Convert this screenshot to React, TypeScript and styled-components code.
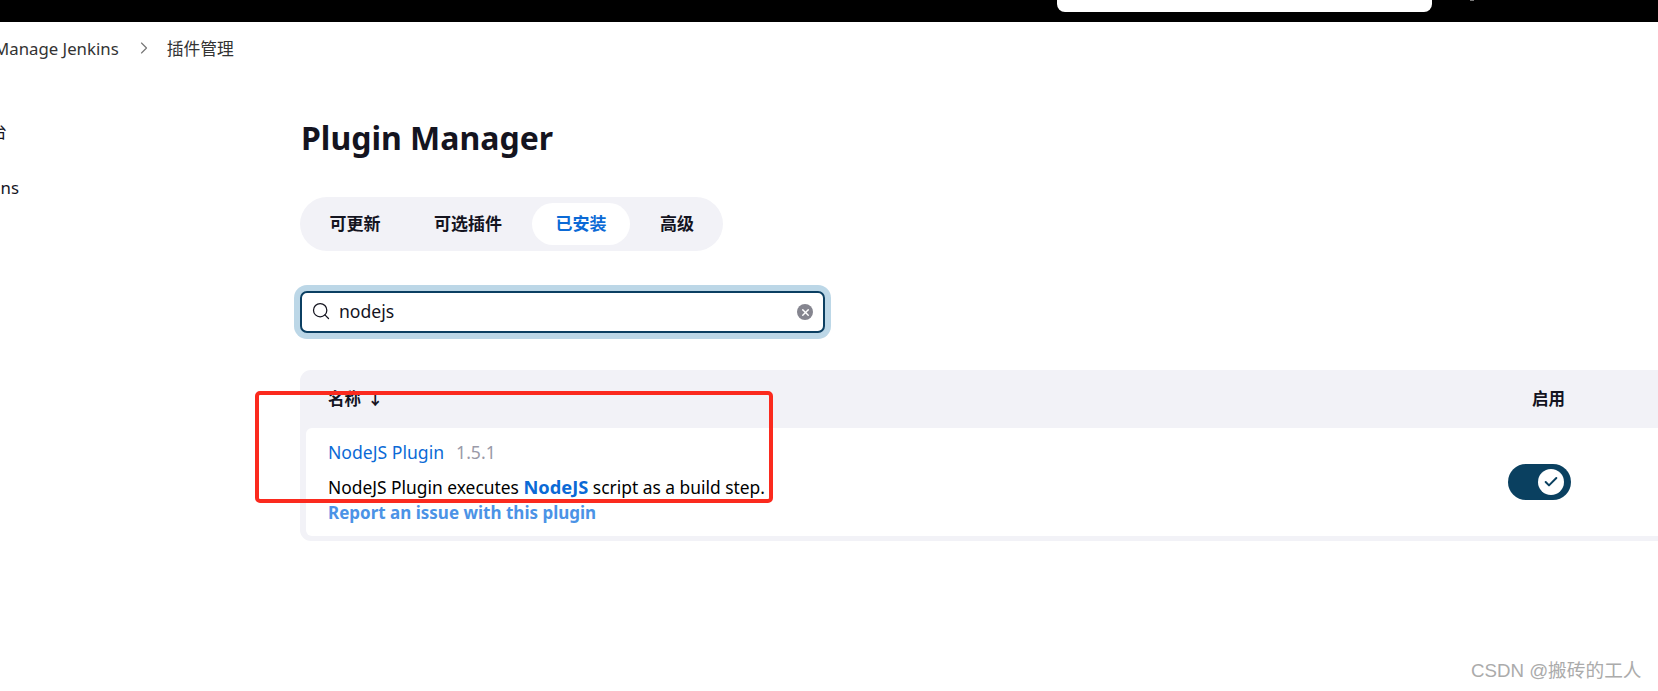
import React from "react";
import styled, { createGlobalStyle } from "styled-components";
import { Check, ChevronRight, Search, X } from "lucide-react";

const GlobalStyle = createGlobalStyle`
  html, body {
    margin: 0;
    padding: 0;
    background: #fff;
    overflow: hidden;
  }
  body {
    font-family: "Noto Sans", "Noto Sans CJK SC", sans-serif;
    color: #14141f;
  }
`;

const Page = styled.div`
  position: relative;
  width: 1658px;
  height: 691px;
  overflow: hidden;
`;

const TopBar = styled.div`
  height: 22px;
  background: #000;
  display: flex;
  justify-content: flex-end;
  padding-right: 184px;
`;

const TopSearch = styled.div`
  width: 375px;
  height: 12px;
  background: #fff;
  border-radius: 0 0 8px 8px;
`;

const TopMark = styled.div`
  width: 4px;
  height: 1px;
  margin-left: 38px;
  background: #777;
`;

const Breadcrumb = styled.div`
  height: 52px;
  display: flex;
  align-items: center;
  margin-left: -6px;
  margin-bottom: 2px;
  font-size: 16.8px;
  color: #333;
`;

const Crumb = styled.span`
  white-space: nowrap;
`;

const CrumbSep = styled.span`
  display: flex;
  margin: 0 13px 0 15px;
  color: #777;
`;

const Main = styled.div`
  display: grid;
  grid-template-columns: 300px 1fr;
`;

const Sidebar = styled.div`
  padding-top: 28px;
`;

const SideItem = styled.div<{ $w: number }>`
  width: ${(p) => p.$w}px;
  height: 56px;
  line-height: 56px;
  font-size: 16.8px;
  display: flex;
  justify-content: flex-end;
  white-space: nowrap;
  color: #14141f;
`;

const Content = styled.div`
  min-width: 0;
`;

const Title = styled.h1`
  margin: 41px 0 0 1px;
  font-size: 32px;
  line-height: 42px;
  font-weight: 700;
  color: #14141f;
`;

const Tabs = styled.div`
  margin-top: 38px;
  width: 423px;
  height: 54px;
  box-sizing: border-box;
  padding: 6px 5px 6px 6px;
  background: #f2f2f7;
  border-radius: 27px;
  display: flex;
  gap: 6px;
`;

const Tab = styled.div<{ $active?: boolean; $w: number }>`
  width: ${(p) => p.$w}px;
  height: 42px;
  line-height: 42px;
  text-align: center;
  font-size: 17px;
  font-weight: 700;
  border-radius: 21px;
  color: ${(p) => (p.$active ? "#0b6ad6" : "#14141f")};
  background: ${(p) => (p.$active ? "#fff" : "transparent")};
`;

const SearchBox = styled.div`
  margin-top: 40px;
  width: 525px;
  height: 42px;
  box-sizing: border-box;
  border: 2px solid #0b3f62;
  border-radius: 7px;
  box-shadow: 0 0 0 6px #bcd7e7;
  background: #fff;
  display: flex;
  align-items: center;
  padding: 0 10px 2px 9px;
`;

const SearchText = styled.div`
  flex: 1;
  margin-left: 8px;
  font-size: 17.6px;
  color: #14141f;
`;

const ClearButton = styled.div`
  width: 16px;
  height: 16px;
  margin-top: 2px;
  border-radius: 50%;
  background: #85858f;
  color: #fff;
  display: flex;
  align-items: center;
  justify-content: center;
`;

const Table = styled.div`
  margin-top: 37px;
  background: #f2f2f7;
  border-radius: 11px 0 0 11px;
  padding: 0 0 5px 6px;
`;

const HeaderRow = styled.div`
  height: 58px;
  padding-bottom: 2px;
  box-sizing: border-box;
  display: flex;
  align-items: center;
  justify-content: space-between;
  font-size: 16.5px;
  font-weight: 700;
  color: #14141f;
`;

const NameHead = styled.div`
  padding-left: 22px;
  display: flex;
  align-items: center;
  gap: 6px;
`;

const EnableHead = styled.div`
  width: 126px;
`;

const PluginRow = styled.div`
  height: 108px;
  background: #fff;
  border-radius: 6px 0 0 6px;
  display: flex;
  align-items: center;
  justify-content: space-between;
`;

const PluginInfo = styled.div`
  align-self: flex-start;
  padding: 12px 0 0 22px;
`;

const PluginName = styled.div`
  display: flex;
  gap: 12px;
  font-size: 17.6px;
  line-height: 24px;
  color: #0b6ad6;
`;

const Version = styled.span`
  color: #9a9aa8;
`;

const Description = styled.div`
  margin-top: 11px;
  font-size: 17.4px;
  line-height: 24px;
  color: #000;
`;

const Strong = styled.b`
  font-size: 18.3px;
  color: #0b6ad6;
`;

const IssueLink = styled.div`
  margin-top: 1px;
  font-size: 17px;
  line-height: 25px;
  font-weight: 700;
  color: #4b93e6;
`;

const ToggleCell = styled.div`
  width: 150px;
`;

const Toggle = styled.div`
  width: 63px;
  height: 36px;
  border-radius: 18px;
  background: #0a4060;
  display: flex;
  align-items: center;
  justify-content: flex-end;
  padding-right: 7px;
  box-sizing: border-box;
`;

const Knob = styled.div`
  width: 26px;
  height: 26px;
  border-radius: 50%;
  background: #fff;
  color: #0a4060;
  display: flex;
  align-items: center;
  justify-content: center;
`;

const Annotation = styled.div`
  position: absolute;
  left: 255px;
  top: 391px;
  width: 518px;
  height: 112px;
  box-sizing: border-box;
  border: 4px solid #fb2a1e;
  border-radius: 5px;
`;

const Watermark = styled.div`
  position: absolute;
  left: 1471px;
  top: 659px;
  font-family: "Liberation Sans", "Noto Sans CJK SC", sans-serif;
  font-size: 18.7px;
  line-height: 24px;
  color: #ababab;
  white-space: nowrap;
`;

export default function App() {
  return (
    <Page>
      <GlobalStyle />
      <TopBar>
        <TopSearch />
        <TopMark />
      </TopBar>
      <Breadcrumb>
        <Crumb>Manage Jenkins</Crumb>
        <CrumbSep>
          <ChevronRight size={20} strokeWidth={1.4} />
        </CrumbSep>
        <Crumb>插件管理</Crumb>
      </Breadcrumb>
      <Main>
        <Sidebar>
          <SideItem $w={7}>返回工作台</SideItem>
          <SideItem $w={19}>Manage Jenkins</SideItem>
        </Sidebar>
        <Content>
          <Title>Plugin Manager</Title>
          <Tabs>
            <Tab $w={98}>可更新</Tab>
            <Tab $w={116}>可选插件</Tab>
            <Tab $w={98} $active>
              已安装
            </Tab>
            <Tab $w={82}>高级</Tab>
          </Tabs>
          <SearchBox>
            <Search size={20} strokeWidth={1.5} color="#14141f" />
            <SearchText>nodejs</SearchText>
            <ClearButton>
              <X size={11} strokeWidth={3} />
            </ClearButton>
          </SearchBox>
          <Table>
            <HeaderRow>
              <NameHead>
                名称 <span>↓</span>
              </NameHead>
              <EnableHead>启用</EnableHead>
            </HeaderRow>
            <PluginRow>
              <PluginInfo>
                <PluginName>
                  NodeJS Plugin <Version>1.5.1</Version>
                </PluginName>
                <Description>
                  NodeJS Plugin executes <Strong>NodeJS</Strong> script as a
                  build step.
                </Description>
                <IssueLink>Report an issue with this plugin</IssueLink>
              </PluginInfo>
              <ToggleCell>
                <Toggle>
                  <Knob>
                    <Check size={16} strokeWidth={3} />
                  </Knob>
                </Toggle>
              </ToggleCell>
            </PluginRow>
          </Table>
        </Content>
      </Main>
      <Annotation />
      <Watermark>CSDN @搬砖的工人</Watermark>
    </Page>
  );
}
